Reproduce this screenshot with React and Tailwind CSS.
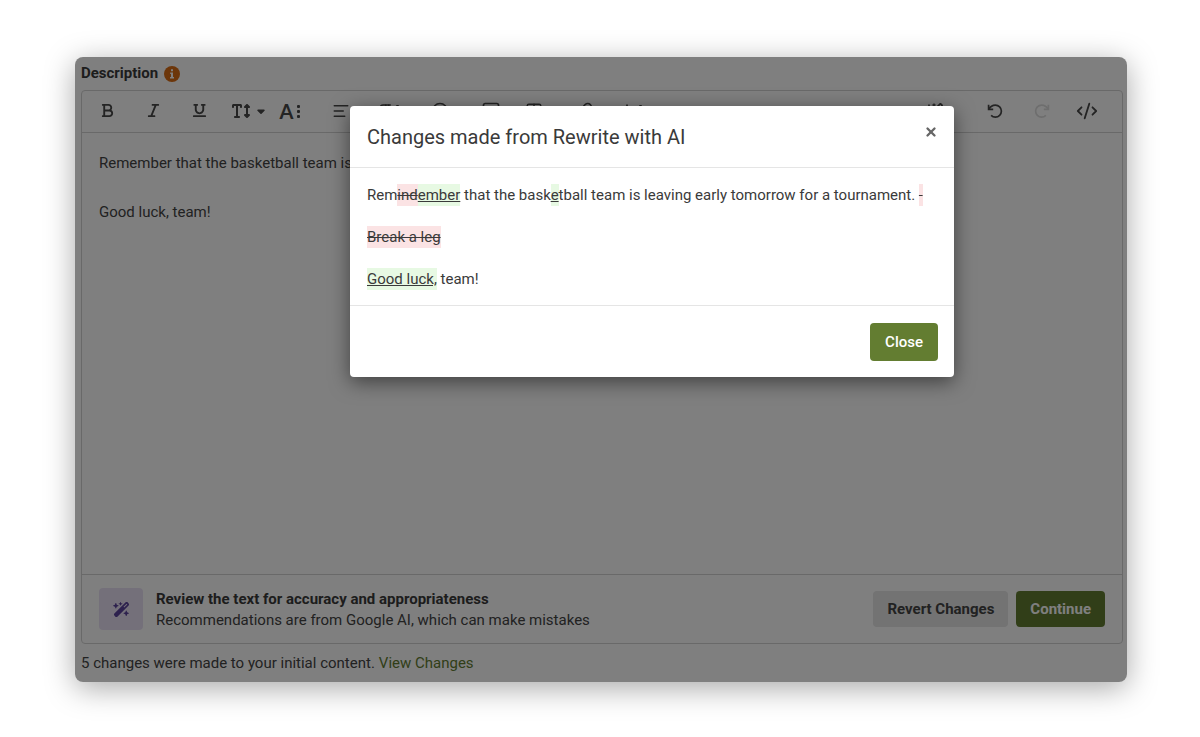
import React, { useState } from 'react';
import { AlignLeft, CodeXml, Image, Link, Pilcrow, Plus, Smile, Table, X } from 'lucide-react';
import { FaBold, FaCaretDown, FaItalic, FaTextHeight, FaUnderline, FaWandMagicSparkles } from 'react-icons/fa6';

// --- ICONS ---
const Dots = () => (
    <svg width="3" height="14" viewBox="0 0 3 14" fill="currentColor">
        <rect y="1" width="3" height="3" rx="1" />
        <rect y="6" width="3" height="3" rx="1" />
        <rect y="11" width="3" height="3" rx="1" />
    </svg>
);

const UndoIcon = ({ className }) => (
    <svg width="16" height="16" viewBox="0 0 16 16" fill="none" stroke="currentColor" strokeWidth="1.7" className={className}>
        <path d="M1.6 1.8v4.6h4.6" />
        <path d="M2 6.2C3.2 3.6 5.6 2.1 8.4 2.1a6 6 0 1 1 0 12c-1.7 0-3.2-.7-4.3-1.8" />
    </svg>
);

// --- TOOLBAR BUTTON ---
const Tool = ({ label, className = 'w-[46px]', children }) => (
    <button type="button" aria-label={label} className={`flex h-full items-center justify-center ${className}`}>
        {children}
    </button>
);

const Toolbar = () => (
    <div className="flex h-[42px] items-center border-b border-[#d2d2d2] px-[2px] pb-[2px] text-[#484848]">
        <Tool label="Bold">
            <FaBold size={15} />
        </Tool>
        <Tool label="Italic">
            <FaItalic size={15} />
        </Tool>
        <Tool label="Underline">
            <FaUnderline size={15} />
        </Tool>
        <Tool label="Font size" className="w-[54px] gap-[5px]">
            <FaTextHeight size={18} />
            <FaCaretDown size={12} />
        </Tool>
        <Tool label="More text" className="w-[28px] gap-1">
            <span className="font-[Lato] text-[20px] leading-none font-bold">A</span>
            <Dots />
        </Tool>
        <Tool label="Align" className="ml-[14px] w-[46px]">
            <AlignLeft size={18} />
        </Tool>
        <Tool label="More paragraph" className="w-[46px] gap-[2px]">
            <Pilcrow size={18} />
            <Dots />
        </Tool>
        <Tool label="Emoticons" className="w-[60px]">
            <Smile size={18} />
        </Tool>
        <Tool label="Insert image" className="w-[42px]">
            <Image size={20} />
        </Tool>
        <Tool label="Insert table" className="w-[44px]">
            <Table size={18} />
        </Tool>
        <Tool label="Insert link" className="w-[56px]">
            <Link size={18} />
        </Tool>
        <Tool label="More rich" className="w-[34px] gap-[2px]">
            <Plus size={20} />
            <Dots />
        </Tool>
        <div className="ml-auto flex h-full pr-2">
            <Tool label="Rewrite with AI" className="w-[74px]">
                <FaWandMagicSparkles size={18} />
            </Tool>
            <Tool label="Undo">
                <UndoIcon />
            </Tool>
            <Tool label="Redo" className="w-[48px] text-[#dcdcdc]">
                <UndoIcon className="-scale-x-100" />
            </Tool>
            <Tool label="Code view" className="w-[46px] pr-1">
                <CodeXml size={22} />
            </Tool>
        </div>
    </div>
);

const Added = ({ children }) => <ins className="bg-[#e7f9e3] py-[2px] underline">{children}</ins>;
const Removed = ({ children }) => <del className="bg-[#fbe3e4] py-[2px] line-through">{children}</del>;

const ChangesModal = ({ onClose }) => (
    <div className="absolute inset-0 flex items-start justify-center overflow-hidden rounded-lg bg-black/50 pt-[49px] pl-[102px]">
        <div role="dialog" aria-labelledby="changes-title" className="w-[604px] rounded-[4px] bg-white text-[#3a3a3a] shadow-[0_5px_20px_rgba(0,0,0,0.5)]">
            <div className="flex items-start justify-between border-b border-[#e5e5e5] pt-4 pr-4 pb-[15px] pl-[17px]">
                <h2 id="changes-title" className="text-[20px] leading-[30px]">Changes made from Rewrite with AI</h2>
                <button type="button" aria-label="Dismiss" onClick={onClose} className="flex h-5 items-center text-[#666]">
                    <X size={14} strokeWidth={4} />
                </button>
            </div>

            <div className="space-y-[21px] border-b border-[#e5e5e5] px-[17px] pt-[17px] pb-[15px] leading-[21px]">
                <p>
                    Rem<Removed>ind</Removed><Added>ember</Added> that the bask<Added>e</Added>tball team is leaving early
                    tomorrow for a tournament. <Removed>&nbsp;</Removed>
                </p>
                <p><Removed>Break a leg</Removed></p>
                <p><Added>Good luck,</Added> team!</p>
            </div>

            <div className="flex justify-end px-4 pt-[17px] pb-4">
                <button type="button" onClick={onClose} className="h-[38px] rounded-[4px] bg-[#637d31] px-[15px] font-medium text-white">
                    Close
                </button>
            </div>
        </div>
    </div>
);

export default function App() {
    const [showChanges, setShowChanges] = useState(true);

    return (
        <div className="min-h-screen bg-white pt-[57px] pr-[73px] pb-[55px] pl-[75px] font-[Roboto,sans-serif] text-[15px] text-[#444]">
            <div className="relative rounded-lg bg-white pr-1 pl-[6px] shadow-[0_6px_30px_rgba(0,0,0,0.35)]">

                {/* LABEL */}
                <div className="flex h-[33px] items-center gap-[6px] font-bold text-[#3a3a3a]">
                    <span>Description</span>
                    <svg width="16" height="16" viewBox="0 0 16 16">
                        <circle cx="8" cy="8" r="8" fill="#d96c14" />
                        <path d="M7 3.2h2v2H7zM6.2 6.5H9V11h1v1.5H6V11h1V8h-.8z" fill="#fff" />
                    </svg>
                </div>

                {/* EDITOR */}
                <div className="rounded-[4px] border border-[#d2d2d2]">
                    <Toolbar />

                    <div className="min-h-[441px] space-y-7 px-[17px] pt-5 leading-[21px]">
                        <p>Remember that the basketball team is leaving early tomorrow for a tournament.</p>
                        <p>Good luck, team!</p>
                    </div>

                    <div className="flex items-center border-t border-[#d2d2d2] px-[17px] py-3">
                        <div className="flex h-[42px] w-[44px] items-center justify-center rounded-[4px] bg-[#e9e1f4] text-[#5b429c]">
                            <FaWandMagicSparkles size={17} />
                        </div>
                        <div className="ml-[13px] pt-[2px] leading-[21px]">
                            <p className="font-bold text-[#3a3a3a]">Review the text for accuracy and appropriateness</p>
                            <p>Recommendations are from Google AI, which can make mistakes</p>
                        </div>
                        <div className="ml-auto flex gap-2 font-bold">
                            <button type="button" className="h-[36px] rounded-[4px] bg-[#e6e6e6] px-[14px]">Revert Changes</button>
                            <button type="button" className="h-[36px] rounded-[4px] bg-[#637d31] px-[14px] text-white">Continue</button>
                        </div>
                    </div>
                </div>

                {/* STATUS */}
                <div className="flex h-[38px] items-center gap-1">
                    <span>5 changes were made to your initial content.</span>
                    <a href="#changes" onClick={() => setShowChanges(true)} className="text-[#637d31]">View Changes</a>
                </div>

                {showChanges && <ChangesModal onClose={() => setShowChanges(false)} />}
            </div>
        </div>
    );
}
